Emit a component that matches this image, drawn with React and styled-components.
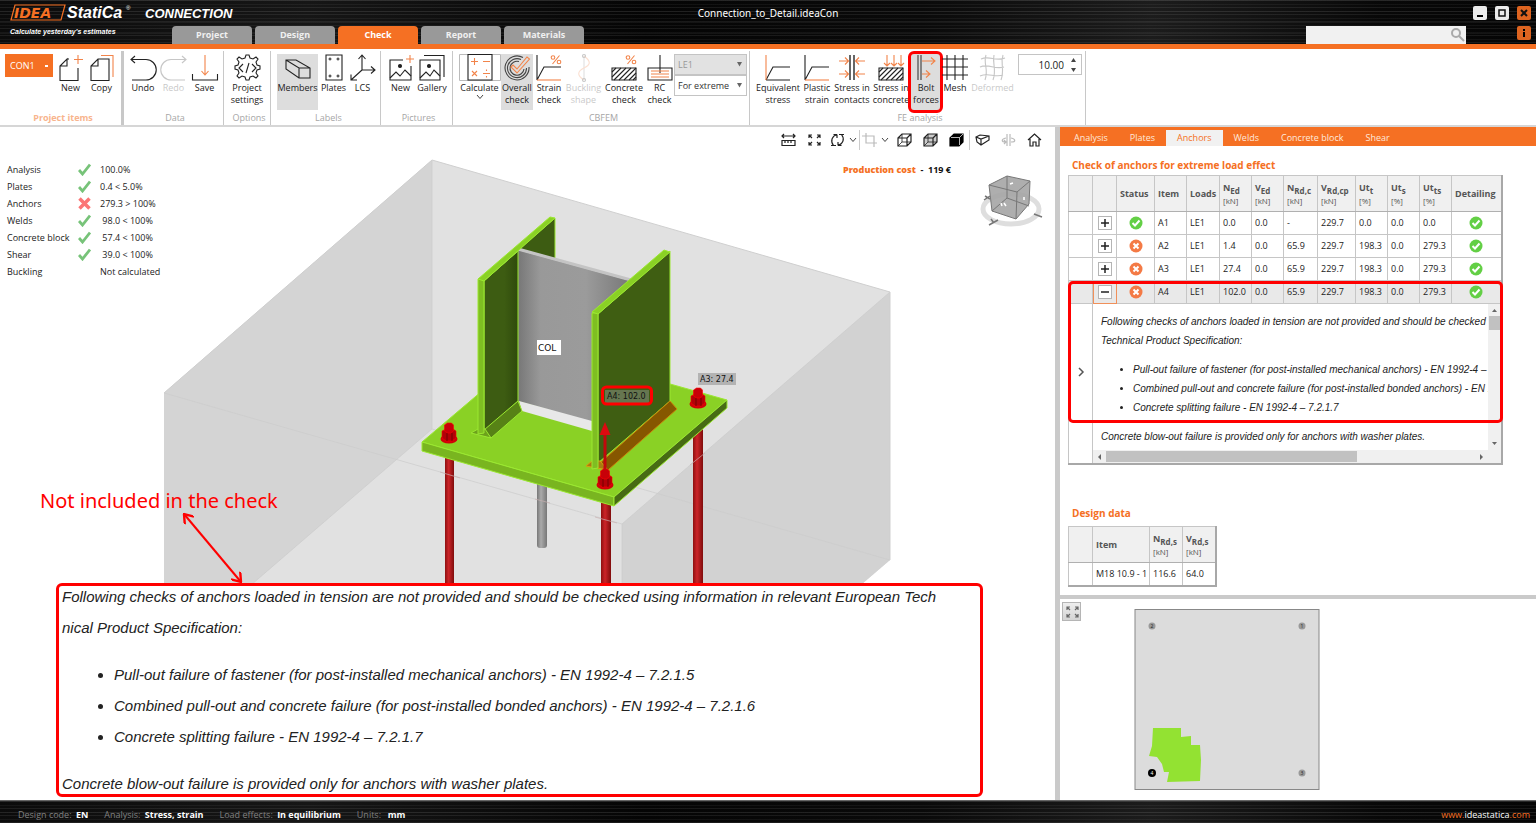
import React from 'react';
import styled, { createGlobalStyle, ThemeProvider } from 'styled-components';

const theme = {
  colors: {
    primary: '#f57023',
    txt: '#222222',
    muted: '#a6a6a6',
    line: '#c8c8c8',
    mark: '#ff0000',
  },
};

const GlobalStyle = createGlobalStyle`
  * { box-sizing: border-box; }

  body {
    margin: 0;
    background: white;
    color: #222222;
    font: 9px/12px "Open Sans", "Noto Sans", sans-serif;
  }

  button, input, select {
    font: inherit;
    color: inherit;
  }

  button {
    padding: 0;
    border: none;
    background: none;
    cursor: pointer;
  }

  h2, p, ul, dl, dd { margin: 0; padding: 0; }
`;

const Page = styled.div`
  display: grid;
  grid-template-rows: auto auto 1fr auto;
  min-height: 100vh;
`;

/* ---------- title bar ---------- */

const brushed = `
  background:
    repeating-linear-gradient(180deg, rgba(255,255,255,.08) 0 1px, transparent 1px 4px, rgba(255,255,255,.05) 4px 5px, transparent 5px 7px),
    repeating-linear-gradient(180deg, rgba(255,255,255,.06) 0 1px, transparent 1px 11px),
    linear-gradient(90deg, #0b0b0b 0%, #161616 20%, #050505 42%, #0a0a0a 60%, #1c1c1c 75%, #080808 90%, #050505 100%);
`;

const Header = styled.header`
  display: grid;
  grid-template-columns: 1fr auto 1fr;
  height: 49px;
  border-bottom: 5px solid ${({ theme }) => theme.colors.primary};
  ${brushed}
`;

const HeaderLeft = styled.div`
  display: flex;
  min-width: 0;
`;

const Brand = styled.div`
  width: 172px;
  padding: 4px 0 0 9px;

  svg { display: block; overflow: visible; }
`;

const Tabs = styled.nav`
  display: flex;
  align-items: flex-end;
  gap: 3px;
`;

const Tab = styled.button`
  width: 80px;
  height: 18px;
  border-radius: 4px 4px 0 0;
  background: ${({ theme, $on }) => ($on ? theme.colors.primary : '#999999')};
  color: ${({ $on }) => ($on ? 'white' : '#f0f0f0')};
  font-weight: bold;
`;

const FileName = styled.div`
  padding-top: 7px;
  color: white;
  font: 10px/12px "Noto Sans", sans-serif;
  white-space: nowrap;
`;

const HeaderRight = styled.div`
  display: grid;
  grid-template-columns: 160px 70px;
  grid-template-rows: 26px 18px;
  justify-content: end;
`;

const WindowBtns = styled.div`
  grid-column: 1 / 3;
  display: flex;
  justify-content: flex-end;
  gap: 8px;
  padding: 6px 5px 0 0;
`;

const WinBtn = styled.button`
  width: 14px;
  height: 14px;
  border-radius: 2px;
  background: ${({ $hot }) => ($hot ? '#de6420' : '#ececec')};
  color: #111111;
  svg { display: block; }
`;

const InfoBtn = styled(WinBtn)`
  justify-self: end;
  margin-right: 5px;
`;

const Search = styled.label`
  display: flex;
  align-items: center;
  height: 18px;
  background: #f1f1f1;

  input {
    flex: 1;
    min-width: 0;
    border: none;
    outline: none;
    background: transparent;
  }
`;

/* ---------- ribbon ---------- */

const Ribbon = styled.div`
  display: flex;
  height: 78px;
  padding-top: 2px;
  border-bottom: 2px solid #d6d6d6;
`;

const Group = styled.section`
  display: flex;
  flex-direction: column;
  justify-content: space-between;
  padding: 3px 0 1px ${({ $pad }) => $pad || 4}px;
  width: ${({ $w }) => $w}px;
  border-right: ${({ $thick }) => ($thick ? '3px' : '1px')} solid ${({ theme }) => theme.colors.line};
`;

const Tools = styled.div`
  display: flex;
  align-items: flex-start;
`;

const GroupName = styled.div`
  text-align: center;
  color: ${({ theme, $hot }) => ($hot ? '#f8b48d' : theme.colors.muted)};
  font-weight: ${({ $hot }) => ($hot ? 'bold' : 'normal')};
`;

const ToolBtn = styled.button`
  position: relative;
  display: flex;
  flex-direction: column;
  align-items: center;
  width: ${({ $w }) => $w}px;
  height: 56px;
  background: ${({ $on }) => ($on ? '#dddddd' : 'transparent')};
  opacity: ${({ disabled }) => (disabled ? 0.25 : 1)};
  color: #222222;
  line-height: 12px;
  text-align: center;
  white-space: pre;

  svg { flex: none; overflow: visible; }
`;

const Marked = styled.span`
  position: absolute;
  inset: -3px -2px -3px -3px;
  border: 3px solid ${({ theme }) => theme.colors.mark};
  border-radius: 6px;
`;

const ItemSelect = styled.select`
  appearance: none;
  width: 48px;
  height: 23px;
  margin-right: 2px;
  padding: 0 5px;
  border: none;
  color: white;
  background: ${({ theme }) => theme.colors.primary}
    linear-gradient(white, white) no-repeat 40px 11px / 3px 2px;
`;

const Picks = styled.div`
  display: flex;
  flex-direction: column;
  margin-left: 1px;
`;

const Pick = styled.select`
  appearance: none;
  width: 73px;
  height: 21px;
  padding: 0 3px;
  border: 1px solid #c4c4c4;
  border-radius: 0;
  background: ${({ disabled }) => (disabled ? '#e2e2e2' : 'white')};
  color: ${({ disabled }) => (disabled ? '#999999' : '#333333')};
  opacity: 1;
`;

const PickWrap = styled.label`
  position: relative;
  display: block;

  svg {
    position: absolute;
    right: 4px;
    top: 7px;
  }
`;

const Spin = styled.label`
  display: flex;
  align-items: center;
  width: 64px;
  height: 21px;
  margin-left: 2px;
  border: 1px solid #c4c4c4;

  input {
    width: 47px;
    border: none;
    outline: none;
    text-align: right;
    font-size: 10px;
  }

  svg { margin-left: 4px; }
`;

/* ---------- work area ---------- */

const Work = styled.main`
  display: grid;
  grid-template-columns: minmax(0, 1fr) 476px;
`;

const Viewport = styled.section`
  position: relative;
  display: flex;
  flex-direction: column;
  min-height: 670px;
  border-right: 5px solid #cacaca;
`;

const Scene = styled.svg`
  position: absolute;
  inset: 0;
  width: 100%;
  height: 100%;
`;

const ViewTools = styled.div`
  position: relative;
  display: flex;
  justify-content: flex-end;
  align-items: center;
  gap: 11px;
  height: 26px;
  padding-right: 13px;

  svg { display: block; }
`;

const Pair = styled.div`
  display: flex;
  align-items: center;
  gap: 4px;
  margin: 0 -3px;
`;

const Bar = styled.i`
  width: 1px;
  height: 20px;
  margin: 0 -6px;
  background: #cccccc;
`;

const Cost = styled.div`
  position: relative;
  padding: 11px 104px 0 0;
  text-align: right;
  font-weight: bold;
  color: #111111;

  b { color: ${({ theme }) => theme.colors.primary}; }
`;

const Stats = styled.dl`
  position: relative;
  display: grid;
  grid-template-columns: 71px 22px auto;
  align-content: start;
  justify-content: start;
  grid-auto-rows: 17px;
  margin-top: -15px;
  padding-left: 7px;
  line-height: 17px;
  white-space: pre;

  svg { display: block; margin-top: 2px; }
`;

const Note = styled.div`
  position: absolute;
  left: 40px;
  bottom: 286px;
  color: ${({ theme }) => theme.colors.mark};
  font: 20px/26px "Noto Sans", sans-serif;
`;

const Callout = styled.div`
  position: absolute;
  left: 56px;
  right: 72px;
  bottom: 3px;
  height: 214px;
  display: flex;
  align-items: center;
  padding: 0 3px;
  border: 3px solid ${({ theme }) => theme.colors.mark};
  border-radius: 6px;
  background: white;
`;

const Remarks = styled.div`
  font: italic ${({ $big }) => ($big ? '15px/31px' : '10px/19px')} "Liberation Sans", Arial, sans-serif;
  color: #222222;
  white-space: nowrap;

  ul {
    margin: ${({ $big }) => ($big ? '16px 0' : '10px 0')};
    padding-left: ${({ $big }) => ($big ? '52px' : '32px')};
  }
`;

/* ---------- side panel ---------- */

const Side = styled.aside`
  display: flex;
  flex-direction: column;
`;

const SideTabs = styled.nav`
  display: flex;
  align-items: flex-end;
  height: 19px;
  padding-left: 3px;
  background: ${({ theme }) => theme.colors.primary};
`;

const SideTab = styled.button`
  height: 16px;
  padding: 0 11px;
  color: ${({ theme, $on }) => ($on ? theme.colors.primary : '#ffe9dc')};
  background: ${({ $on }) => ($on ? '#f1f1f1' : 'transparent')};
`;

const Results = styled.div`
  flex: 1;
  padding: 12px 8px 0;

  h2 {
    padding-left: 4px;
    font-size: 10px;
    line-height: 14px;
    color: ${({ theme }) => theme.colors.primary};
  }
`;

const TableBox = styled.div`
  position: relative;
  width: ${({ $w }) => $w}px;
  margin: ${({ $top }) => $top}px 0 ${({ $after }) => $after}px;
`;

const Table = styled.table`
  width: 100%;
  table-layout: fixed;
  border-collapse: collapse;
  border: 1px solid #a8a8a8;
  border-right-width: 2px;
  border-bottom-width: 2px;

  th, td {
    height: 23px;
    padding: 0 0 0 3px;
    border: 1px solid #c6c6c6;
    text-align: left;
    white-space: nowrap;
  }

  th {
    height: 36px;
    background: #f0f0f0;
    color: #555555;
    border-bottom-color: #b0b0b0;
  }

  sub { font-size: 8px; line-height: 0; }
  small { display: block; margin-top: 2px; font-size: 8px; line-height: 10px; font-weight: normal; }
`;

const Row = styled.tr`
  background: ${({ $on }) => ($on ? '#e9e9e9' : 'white')};
`;

const MidCell = styled.td`
  && { padding: 0; text-align: center; }
  svg { display: block; margin: 0 auto; }
  outline: ${({ $focus }) => ($focus ? '1px solid #f0905a' : 'none')};
  outline-offset: -1px;
`;

const MarkerCell = styled(MidCell)`
  && { padding-bottom: 24px; }
`;

const Expander = styled.button`
  display: block;
  width: 14px;
  height: 14px;
  margin: 0 auto;
  border: 1px solid #b5b5b5;
  background: white;
  svg { display: block; }
`;

const DetailCell = styled.td`
  && { padding: 0; vertical-align: top; }
`;

const Scroller = styled.div`
  display: grid;
  grid-template-columns: minmax(0, 1fr) 13px;
  grid-template-rows: 146px 13px;
`;

const ScrollBody = styled.div`
  overflow: hidden;
  padding: 8px 0 0 8px;
`;

const Track = styled.div`
  display: flex;
  flex-direction: ${({ $down }) => ($down ? 'column' : 'row')};
  align-items: center;
  background: #f0f0f0;

  i {
    width: ${({ $down }) => ($down ? '11px' : '251px')};
    height: ${({ $down }) => ($down ? '14px' : '11px')};
    background: #c1c1c1;
  }

  svg { flex: none; }
  svg:last-child { margin: ${({ $down }) => ($down ? 'auto 0 0' : '0 0 0 auto')}; }
`;

const RowMark = styled.div`
  position: absolute;
  inset: 106px -1px auto 0;
  height: 142px;
  border: 3px solid ${({ theme }) => theme.colors.mark};
  border-radius: 5px;
`;

const Preview = styled.div`
  display: flex;
  align-items: flex-start;
  gap: 53px;
  height: 205px;
  padding: 3px 2px 0;
  border-top: 4px solid #cacaca;

  > svg { margin-top: 7px; }
`;

const FitBtn = styled.button`
  width: 19px;
  height: 19px;
  border: 1px solid #b5b5b5;
  background: linear-gradient(#eeeeee, #d4d4d4);
  svg { display: block; margin: 2px; }
`;

const Footer = styled.footer`
  display: flex;
  gap: 16px;
  align-items: center;
  height: 23px;
  padding: 6px 6px 0 18px;
  ${brushed}
  border-top: 1px solid #666666;
  color: #808080;

  b { margin-left: 2px; color: white; }

  a {
    margin-left: auto;
    color: ${({ theme }) => theme.colors.primary};
    text-decoration: none;
  }
  a span { color: white; }
`;

/* ---------- icons ---------- */

const O = '#f2844a';

const Ico = ({ w = 26, children }) => (
  <svg width={w} height="28" viewBox={`0 0 ${w} 28`} fill="none" stroke="#222" strokeWidth="1.1" aria-hidden="true">
    {children}
  </svg>
);

const Small = ({ children, ...rest }) => (
  <svg width="15" height="14" viewBox="0 0 15 14" fill="none" stroke="#222" strokeWidth="1.2" aria-hidden="true" {...rest}>
    {children}
  </svg>
);

const Hatch = () => (
  <>
    <path d="M1 14h24v12H1z" />
    <path d="M1 18l4-4M1 23l9-9M3 26l12-12M8 26l12-12M13 26l12-12M18 26l7-7M22 26l3-3" />
  </>
);

const Percent = () => (
  <g stroke={O}>
    <circle cx="17" cy="3.5" r="1.8" />
    <circle cx="23" cy="8" r="1.8" />
    <path d="M23.500 1.500l-7 8.500" />
  </g>
);

const icons = {
  newItem: (
    <Ico>
      <path d="M20 14v12.5H2V12l7-7v7H2M9 5h2" />
      <path d="M20 1v9M16 5.5h9" stroke={O} />
    </Ico>
  ),
  copy: (
    <Ico>
      <path d="M20 5v21.5H2V12l7-7zM9 5v7H2M9 5h11" />
      <path d="M12 1.5h12V23" stroke={O} />
    </Ico>
  ),
  undo: <Ico><path d="M5 2L1 5.5 5 9M1 5.5h15a10 10 0 0 1 0 20.500H2" /></Ico>,
  redo: <Ico><path d="M21 2l4 3.500L21 9M25 5.500H10a10 10 0 0 0 0 20.500h14" /></Ico>,
  save: (
    <Ico>
      <path d="M.5 20v6h25v-6" />
      <path d="M13 1v19M9.500 17l3.500 4 3.500-4" stroke={O} />
    </Ico>
  ),
  settings: (
    <Ico>
      <path d="M11 4l1-3h3l1 3 3 1 3-2 2 2-2 3 1 3 3 1v3l-3 1-1 3 2 3-2 2-3-2-3 1-1 3h-3l-1-3-3-1-3 2-2-2 2-3-1-3-3-1v-3l3-1 1-3-2-3 2-2 3 2z" />
      <path d="M9 10l-4 4 4 4M18 10l4 4-4 4M15 9l-3 10" />
    </Ico>
  ),
  members: <Ico><path d="M1 6h10l14 8v10H14L1 15zM1 6l13 8h11M14 14v10" /></Ico>,
  plates: (
    <Ico>
      <path d="M5 1h16v25H5z" />
      <g strokeWidth="1"><circle cx="9" cy="5" r="1" /><circle cx="17" cy="5" r="1" /><circle cx="9" cy="22" r="1" /><circle cx="17" cy="22" r="1" /></g>
    </Ico>
  ),
  lcs: <Ico><path d="M12 1v15h13M12 16L1 26M8.500 5L12 1l3.500 4M21 12.500l4 3.500-4 3.500M1 20.500V26h6" /></Ico>,
  picture: (
    <Ico>
      <path d="M15 6H2v20h21V12" />
      <path d="M2 24l6-6 4 4 5-6 6 6" />
      <circle cx="12" cy="12" r="1.5" fill="#222" />
      <path d="M22 1v8M18 5h8" stroke={O} />
    </Ico>
  ),
  gallery: (
    <Ico>
      <path d="M1 6h20v20H1zM5 1.500h20V23" />
      <path d="M1 24l6-6 4 4 4-6 6 6" />
      <circle cx="10" cy="12" r="1.5" fill="#222" />
    </Ico>
  ),
  calculate: (
    <Ico w={42}>
      <path d="M.5.500h41v26H.5z" stroke="#bbb" strokeWidth="1" />
      <path d="M9 .5h24v25.500H9z" />
      <path d="M12 7.500h7M15.500 4v7M24 7.500h7M13 17l5 5M18 17l-5 5M24 19.500h7M27.500 15.500v1.500M27.500 22v1.500" stroke={O} />
    </Ico>
  ),
  overall: (
    <Ico>
      <g stroke="#444">
        <path d="M19 3.500A12 12 0 1 0 25 13" />
        <path d="M17 5.500A9.500 9.500 0 1 0 22.500 14" />
        <path d="M15 7.500A7 7 0 1 0 20 15" />
      </g>
      <path d="M7 13l2-2 4 4 10-12 2.500 2L13 19z" stroke={O} fill="#ddd" />
    </Ico>
  ),
  strain: (
    <Ico>
      <path d="M1 1v25l7-13h17" />
      <path d="M1 26h24" stroke={O} />
      <Percent />
    </Ico>
  ),
  buckling: (
    <Ico>
      <path d="M13 2v24" stroke="#888" />
      <path d="M13 2c8 6 6 9 0 12s-8 7 0 12" stroke={O} />
      <circle cx="13" cy="2" r="1.5" /><circle cx="13" cy="26" r="1.5" />
    </Ico>
  ),
  concrete: <Ico><Hatch /><Percent /></Ico>,
  rc: (
    <Ico>
      <path d="M1 14h24v12H1zM13 1v18" />
      <path d="M4 17h18M4 20h18M4 23h18" stroke={O} />
    </Ico>
  ),
  equivalent: (
    <Ico>
      <path d="M1 26l7-13h17M1 26h24" />
      <path d="M1 1v25" stroke={O} />
    </Ico>
  ),
  plastic: (
    <Ico>
      <path d="M1 1v25l7-13h17" />
      <path d="M1 26h24" stroke={O} />
    </Ico>
  ),
  contacts: (
    <Ico>
      <path d="M11 1v25M15 1v25" stroke="#666" strokeWidth="2" />
      <path d="M0 7h9M6 3.500L9.500 7 6 10.500M26 7h-9M20 3.500L16.500 7l3.500 3.500M0 20h9M6 16.500L9.500 20 6 23.500M26 20h-9M20 16.500L16.500 20l3.500 3.500" stroke={O} />
    </Ico>
  ),
  inConcrete: (
    <Ico>
      <Hatch />
      <path d="M9 1v11M6 9l3 3 3-3M16 1v11M13 9l3 3 3-3M23 1v11M20 9l3 3 3-3" stroke={O} />
    </Ico>
  ),
  bolt: (
    <Ico>
      <path d="M5 1v25M8 1v25" stroke="#666" strokeWidth="1.5" />
      <path d="M9 7h13M18 3.500L22 7l-4 3.500M9 20h8M13 16.500l4 3.500-4 3.500" stroke={O} />
    </Ico>
  ),
  mesh: <Ico><path d="M5 1v25M13 1v25M21 1v25M0 5h26M0 13h26M0 21h26" /></Ico>,
  deformed: (
    <Ico>
      <path d="M6 1c-3 9 3 14-1 25M14 1c-2 9 3 14-1 25M23 1c-3 9 2 14-2 25M1 5c9-4 14 3 24-1M0 13c9-4 14 3 24 0M0 22c9-4 14 2 23-1" />
    </Ico>
  ),
};

const Chevron = () => (
  <svg width="8" height="6" viewBox="0 0 8 6" fill="none" stroke="#444" aria-hidden="true"><path d="M1 1l3 3.500L7 1" /></svg>
);

const Caret = () => (
  <svg width="7" height="6" viewBox="0 0 7 6" fill="#666" aria-hidden="true"><path d="M1 1h5L3.500 5.500z" /></svg>
);

const Corners = ({ color = '#222' }) => (
  <Small stroke={color}>
    <path d="M2 5V2h3M2 2l3 3M10 2h3v3M13 2l-3 3M2 9v3h3M2 12l3-3M13 9v3h-3M13 12l-3-3" />
  </Small>
);

const Arrow = ({ d }) => (
  <svg width="13" height="12" viewBox="0 0 13 12" aria-hidden="true"><path d={d} fill="#666" /></svg>
);

const Passed = () => (
  <svg width="14" height="14" viewBox="0 0 14 14" aria-label="passed">
    <circle cx="7" cy="7" r="6.5" fill="#63cf45" />
    <path d="M3.500 7l2.500 2.500 4.500-5" fill="none" stroke="white" strokeWidth="2" />
  </svg>
);

const Failed = () => (
  <svg width="14" height="14" viewBox="0 0 14 14" aria-label="failed">
    <circle cx="7" cy="7" r="6.5" fill="#f47a45" />
    <path d="M4.500 4.500l5 5M9.500 4.500l-5 5" fill="none" stroke="white" strokeWidth="2" />
  </svg>
);

const Tick = () => (
  <svg width="13" height="13" viewBox="0 0 13 13" aria-hidden="true"><path d="M1 7l3.500 4L12 1.500" fill="none" stroke="#77c379" strokeWidth="2.8" /></svg>
);

const Cross = () => (
  <svg width="13" height="13" viewBox="0 0 13 13" aria-hidden="true"><path d="M1.500 1.500l10 10M11.500 1.500l-10 10" fill="none" stroke="#fb7676" strokeWidth="3.5" /></svg>
);

/* ---------- data ---------- */

const groups = [
  { name: 'Data', w: 100, pad: 3, tools: [['undo', 'Undo', 32], ['redo', 'Redo', 29, { disabled: true }], ['save', 'Save', 33]] },
  { name: 'Options', w: 47, tools: [['settings', 'Project\nsettings', 38]] },
  { name: 'Labels', w: 110, pad: 6, tools: [['members', 'Members', 41, { on: true }], ['plates', 'Plates', 31], ['lcs', 'LCS', 27]] },
  { name: 'Pictures', w: 72, pad: 4, tools: [['picture', 'New', 31], ['gallery', 'Gallery', 32]] },
  {
    name: 'CBFEM', w: 297, pad: 5,
    tools: [
      ['calculate', 'Calculate', 43], ['overall', 'Overall\ncheck', 32, { on: true }], ['strain', 'Strain\ncheck', 32],
      ['buckling', 'Buckling\nshape', 37, { disabled: true }], ['concrete', 'Concrete\ncheck', 44], ['rc', 'RC\ncheck', 27],
    ],
  },
  {
    name: 'FE analysis', w: 336, pad: 5,
    tools: [
      ['equivalent', 'Equivalent\nstress', 46], ['plastic', 'Plastic\nstrain', 32], ['contacts', 'Stress in\ncontacts', 38],
      ['inConcrete', 'Stress in\nconcrete', 40], ['bolt', 'Bolt\nforces', 30, { on: true, mark: true }], ['mesh', 'Mesh', 28],
      ['deformed', 'Deformed', 47, { disabled: true }],
    ],
  },
];

const summary = [
  ['Analysis', true, '100.0%'],
  ['Plates', true, '0.4 < 5.0%'],
  ['Anchors', false, '279.3 > 100%'],
  ['Welds', true, ' 98.0 < 100%'],
  ['Concrete block', true, ' 57.4 < 100%'],
  ['Shear', true, ' 39.0 < 100%'],
  ['Buckling', null, 'Not calculated'],
];

const anchors = [
  ['A1', true, '0.0', '0.0', '-', '229.7', '0.0', '0.0', '0.0'],
  ['A2', false, '1.4', '0.0', '65.9', '229.7', '198.3', '0.0', '279.3'],
  ['A3', false, '27.4', '0.0', '65.9', '229.7', '198.3', '0.0', '279.3'],
  ['A4', false, '102.0', '0.0', '65.9', '229.7', '198.3', '0.0', '279.3'],
];

const heads = [
  ['N', 'Ed', 'kN'], ['V', 'Ed', 'kN'], ['N', 'Rd,c', 'kN'], ['V', 'Rd,cp', 'kN'],
  ['Ut', 't', '%'], ['Ut', 's', '%'], ['Ut', 'ts', '%'],
];

const colWidths = [24, 24, 38, 32, 33, 32, 32, 34, 38, 32, 32, 32, 50];

/* ---------- parts ---------- */

const Logo = () => (
  <Brand>
    <svg width="160" height="32" viewBox="0 0 160 32" role="img" aria-label="IDEA StatiCa">
      <path d="M6 1h50l-4 15H2z" fill="none" stroke="#f57023" strokeWidth="1.2" />
      <text x="5" y="14" fontFamily="DejaVu Sans" fontWeight="bold" fontStyle="italic" fontSize="14" fill="#f57023">IDEA</text>
      <text x="58" y="14" fontFamily="Liberation Sans" fontWeight="bold" fontStyle="italic" fontSize="16" fill="white">StatiCa</text>
      <text x="117" y="6" fontFamily="Liberation Sans" fontSize="6" fill="white">®</text>
      <text x="136" y="14" fontFamily="Liberation Sans" fontWeight="bold" fontStyle="italic" fontSize="13" fill="white">CONNECTION</text>
      <text x="1" y="30" fontFamily="Liberation Sans" fontStyle="italic" fontWeight="bold" fontSize="7" fill="white">Calculate yesterday's estimates</text>
    </svg>
  </Brand>
);

const Tool = ({ icon, label, w, on, mark, disabled }) => (
  <ToolBtn $w={w} $on={on} disabled={disabled}>
    {icons[icon]}
    {label}
    {icon === 'calculate' && <Chevron />}
    {mark && <Marked />}
  </ToolBtn>
);

const RemarkText = ({ big }) => (
  <Remarks $big={big}>
    <p>
      {big ? (
        <>Following checks of anchors loaded in tension are not provided and should be checked using information in relevant European Tech<br />nical Product Specification:</>
      ) : (
        <>Following checks of anchors loaded in tension are not provided and should be checked using information in relevant European<br />Technical Product Specification:</>
      )}
    </p>
    <ul>
      <li>Pull-out failure of fastener (for post-installed mechanical anchors) - EN 1992-4 – 7.2.1.5</li>
      <li>Combined pull-out and concrete failure (for post-installed bonded anchors) - EN 1992-4 – 7.2.1.6</li>
      <li>Concrete splitting failure - EN 1992-4 – 7.2.1.7</li>
    </ul>
    <p>Concrete blow-out failure is provided only for anchors with washer plates.</p>
  </Remarks>
);

const Nut = ({ x, y }) => (
  <g transform={`translate(${x} ${y})`}>
    <ellipse cx="0" cy="6" rx="8.5" ry="4.5" fill="#d00008" />
    <path d="M-7-2l4-2h7l3 2v7l-4 3h-6l-4-3z" fill="#b40008" stroke="#f00" strokeWidth=".6" />
    <path d="M-4.500-8l3-2h4l2 2v6l-3 2h-3l-3-2z" fill="#c80008" stroke="#f00" strokeWidth=".6" />
    <path d="M-2 0v8M3 0v8" stroke="#600" strokeWidth=".8" />
  </g>
);

const Model = () => (
  <Scene viewBox="0 127 1055 673" aria-label="3D model">
    <defs>
      <linearGradient id="rod">
        <stop offset="0" stopColor="#8d1010" /><stop offset=".4" stopColor="#cc2428" /><stop offset="1" stopColor="#800c0c" />
      </linearGradient>
      <linearGradient id="steel">
        <stop offset="0" stopColor="#777" /><stop offset=".4" stopColor="#aaa" /><stop offset="1" stopColor="#777" />
      </linearGradient>
      <linearGradient id="web">
        <stop offset="0" stopColor="#777" /><stop offset=".2" stopColor="#999" /><stop offset=".6" stopColor="#9b9b9b" /><stop offset="1" stopColor="#777" />
      </linearGradient>
      <linearGradient id="inner">
        <stop offset="0" stopColor="#3d5c12" /><stop offset=".6" stopColor="#3d5c12" /><stop offset="1" stopColor="#2f4a0c" />
      </linearGradient>
      <marker id="tip" viewBox="0 0 10 10" refX="9" refY="5" markerWidth="6" markerHeight="6" orient="auto-start-reverse">
        <path d="M2 0l7 5-7 5" fill="none" stroke="red" strokeWidth="2" />
      </marker>
    </defs>

    <path d="M164 393L432 160l458 132v268L622 790 164 660z" fill="#e1e1e1" />
    <path d="M164 393L432 160v269L164 660z" fill="#d4d4d4" />
    <path d="M622 524l268-232v268L622 790z" fill="#d2d2d2" />
    <path d="M164 393l458 131L890 292M622 524v266M432 160v269M432 429l458 131M432 429L164 660" fill="none" stroke="#cccccc" strokeWidth=".7" />
    <path d="M164 393L432 160l458 132v268" fill="none" stroke="#cfcfcf" />

    <rect x="445" y="455" width="9" height="135" fill="url(#rod)" />
    <rect x="601" y="500" width="10" height="90" fill="url(#rod)" />
    <rect x="693" y="428" width="10" height="160" fill="url(#rod)" />
    <rect x="537" y="480" width="10" height="68" rx="3" fill="url(#steel)" />
    <path d="M440 472l20 6M535 499l15 4M595 517l22 6M690 465l15-12" stroke="#c8b0b0" strokeWidth=".7" />

    <g stroke="#9be831" strokeWidth="1" strokeLinejoin="round">
      <path d="M422 442L535 346l192 54-113 97z" fill="#8ad125" />
      <path d="M422 442l192 55v9l-192-55z" fill="#79b520" />
      <path d="M614 497l113-97v8l-113 98z" fill="#476b14" />
      <path d="M519 249l36-31v41l-36-10z" fill="#3d5c12" />
    </g>
    <path d="M518 250l113 31-39 32v109l-74-21z" fill="url(#web)" />
    <path d="M631 281l-39 32v12z" fill="#6d6d6d" opacity=".5" />
    <path d="M518 249l113 31" stroke="#c4c4c4" strokeWidth="3" />
    <path d="M519 401l73 20v10l-70-20z" fill="#e8e8e8" />
    <g stroke="#9be831" strokeWidth="1" strokeLinejoin="round">
      <path d="M484 281l34-30v150l-34 32z" fill="url(#inner)" />
      <path d="M484 430l34-29 4 10-31 27z" fill="#578216" />
      <path d="M471 433l7-4 7 0 6 9z" fill="#6da11c" />
      <path d="M478 279h6v154l-6 1z" fill="#7fbe22" />
      <path d="M478 279l72-62 5 1-71 63z" fill="#8ad125" />
      <path d="M598 314l72-63v150l-72 62z" fill="#3f5e12" />
      <path d="M600 463l70-62 7 8-69 61z" fill="#865700" stroke="#c98408" />
      <path d="M586 466l6-5h8l8 9z" fill="#a87a10" stroke="#d8a010" />
      <path d="M592 313h6v155l-6 1z" fill="#7fbe22" />
      <path d="M592 312l72-62 6 2-72 62z" fill="#8ad125" />
    </g>

    <Nut x={449} y={433} />
    <Nut x={605} y={479} />
    <Nut x={698} y={398} />
    <path d="M605 470v-36" stroke="#c0080c" strokeWidth="3" />
    <path d="M605 422l5.500 13h-11z" fill="#dd0a10" />

    <rect x="537" y="340" width="24" height="15" fill="white" />
    <rect x="698" y="373" width="38" height="12" fill="#b3b3b3" />
    <rect x="605" y="390" width="44" height="13" fill="#667650" />
    <g fontFamily="DejaVu Sans" fill="#111">
      <text x="538" y="351" fontSize="9">COL</text>
      <text x="700" y="382" fontSize="8">A3: 27.4</text>
      <text x="607" y="399" fontSize="8">A4: 102.0</text>
    </g>
    <rect x="602.5" y="387" width="49" height="17" rx="4" fill="none" stroke="red" strokeWidth="3" />
    <path d="M184 514l57 68" stroke="red" strokeWidth="2" markerStart="url(#tip)" markerEnd="url(#tip)" />

    <ellipse cx="1011" cy="209" rx="28" ry="15" fill="none" stroke="#dedede" strokeWidth="5" />
    <path d="M989 185l18-9 23 5-1 23-13 15-24-8z" fill="#a5a5a5" opacity=".9" />
    <path d="M989 185l18-9 23 5-13 11zM1017 192l-1 27M1007 176v22l22 8M1007 198l-15 13M989 185l3 26 24 8 13-15 1-23" fill="none" stroke="#777" />
    <path d="M989 225l9-5M991 219l3 4M984 200l6-4M985 196l5 3M1034 214l8 3" stroke="#777" strokeWidth="1.5" />
    <path d="M1010 184l3-1M1001 203l1 3M1004 203l2 3M1024 200v-3" stroke="white" strokeWidth="1.5" />
  </Scene>
);

const CubeIcon = ({ fill = 'none' }) => (
  <Small fill={fill}>
    <path d="M1 5l4-4h9v8l-4 4H1zM1 5h9v8M10 5l4-4" stroke={fill === '#000' ? '#000' : '#222'} />
    {fill === '#000' ? <path d="M2 4.500h8.500V12M10.500 4.500L14 1" stroke="#fff" strokeWidth=".7" fill="none" /> : <path d="M5 1v8h9M5 9l-4 4" strokeWidth=".8" fill="none" />}
  </Small>
);

const ViewBar = () => (
  <ViewTools>
    <button aria-label="Dimensions"><Small><path d="M1 3h13M3 1L1 3l2 2M12 1l2 2-2 2M1 7.500h13v5H1zM4 8v2M7 8v2M10 8v2" /></Small></button>
    <button aria-label="Fit view"><Corners /></button>
    <Pair>
      <button aria-label="Rotate"><Small><path d="M7 5V1.500M7 1.500H3.500M7 1.500C2 3 0 8 3.500 12.500M1 12.500h5M8 12.500V9M8 12.500h3.500M8 12.500C13 11 15 6 11.500 1.500M9 1.500h5" /></Small></button>
      <Chevron />
    </Pair>
    <Bar />
    <Pair>
      <button aria-label="Crop"><Small stroke="#bbb"><path d="M4 0v10h11M0 3h12v11" /></Small></button>
      <Chevron />
    </Pair>
    <button aria-label="Wireframe"><CubeIcon /></button>
    <button aria-label="Transparent"><CubeIcon fill="#ccc" /></button>
    <button aria-label="Solid"><CubeIcon fill="#000" /></button>
    <Bar />
    <button aria-label="Member view"><Small><path d="M1 4l4-2 9 1v4l-8 5-4-3zM1 4l5 2 8-3M6 6v6" /></Small></button>
    <button aria-label="Mirror"><Small stroke="#bbb"><path d="M6 1v12M9 1v12M5 5C0 6 0 9 5 9M3 7l2 2-2 2M10 5c5 1 5 4 0 4" /></Small></button>
    <button aria-label="Home"><Small><path d="M1 7l6.500-6L14 7M3 6v7h3V9h3v4h3V6" /></Small></button>
  </ViewTools>
);

const Head = ({ sym, sub, unit }) => (
  <th>{sym}<sub>{sub}</sub><small>[{unit}]</small></th>
);

const AnchorTable = () => (
  <TableBox $w={434} $top={3} $after={41}>
    <Table>
      <colgroup>{colWidths.map((w, i) => <col key={i} width={w} />)}</colgroup>
      <thead>
        <tr>
          <th /><th /><th>Status</th><th>Item</th><th>Loads</th>
          {heads.map(([sym, sub, unit]) => <Head key={sym + sub} sym={sym} sub={sub} unit={unit} />)}
          <th>Detailing</th>
        </tr>
      </thead>
      <tbody>
        {anchors.map(([item, ok, ...vals]) => {
          const open = item === 'A4';
          return (
            <Row key={item} $on={open}>
              <td />
              <MidCell $focus={open}>
                <Expander aria-label={`Toggle ${item}`}>
                  <svg width="12" height="12" viewBox="0 0 12 12" stroke="#222" strokeWidth="1.5"><path d={open ? 'M2 6h8' : 'M2 6h8M6 2v8'} /></svg>
                </Expander>
              </MidCell>
              <MidCell>{ok ? <Passed /> : <Failed />}</MidCell>
              <td>{item}</td>
              <td>LE1</td>
              {vals.map((v, i) => <td key={i}>{v}</td>)}
              <MidCell><Passed /></MidCell>
            </Row>
          );
        })}
        <tr>
          <MarkerCell>
            <svg width="8" height="10" viewBox="0 0 8 10" fill="none" stroke="#555" strokeWidth="1.5"><path d="M2 1l4 4-4 4" /></svg>
          </MarkerCell>
          <DetailCell colSpan="12">
            <Scroller>
              <ScrollBody><RemarkText /></ScrollBody>
              <Track $down><Arrow d="M4 8l2.500-3L9 8z" /><i /><Arrow d="M4 4l2.500 3L9 4z" /></Track>
              <Track><Arrow d="M8 3L5 6l3 3z" /><i /><Arrow d="M5 3l3 3-3 3z" /></Track>
              <Track />
            </Scroller>
          </DetailCell>
        </tr>
      </tbody>
    </Table>
    <RowMark />
  </TableBox>
);

const DesignTable = () => (
  <TableBox $w={148} $top={6} $after={8}>
    <Table>
      <colgroup>{[24, 57, 33, 33].map((w, i) => <col key={i} width={w} />)}</colgroup>
      <thead>
        <tr><th /><th>Item</th><Head sym="N" sub="Rd,s" unit="kN" /><Head sym="V" sub="Rd,s" unit="kN" /></tr>
      </thead>
      <tbody>
        <tr><td /><td>M18 10.9 - 1</td><td>116.6</td><td>64.0</td></tr>
      </tbody>
    </Table>
  </TableBox>
);

const PlatePlan = () => (
  <svg width="186" height="181" viewBox="1134 609 186 181" role="img" aria-label="Anchor plan">
    <rect x="1135" y="609.5" width="184" height="180" fill="#dcdcdc" stroke="#888" />
    <path d="M1153 728h28v9l10-1v9h9l1 15-1 21-33 1 2-10h-5l-2-8-5-7-8-1 3-10z" fill="#93e232" />
    {[[1152, 626, '2'], [1302, 626, '1'], [1302, 773, '3'], [1152, 773, '4']].map(([x, y, n]) => (
      <g key={n}>
        <circle cx={x} cy={y} r={n === '4' ? 4 : 3.5} fill={n === '4' ? '#000' : '#999'} />
        <text x={x} y={y + 2} fontSize="5" textAnchor="middle" fill={n === '4' ? '#fff' : '#222'}>{n}</text>
      </g>
    ))}
  </svg>
);

export default function App() {
  return (
    <ThemeProvider theme={theme}>
      <GlobalStyle />
      <Page>
        <Header>
          <HeaderLeft>
            <Logo />
            <Tabs>
              {['Project', 'Design', 'Check', 'Report', 'Materials'].map((t) => <Tab key={t} $on={t === 'Check'}>{t}</Tab>)}
            </Tabs>
          </HeaderLeft>
          <FileName>Connection_to_Detail.ideaCon</FileName>
          <HeaderRight>
            <WindowBtns>
              <WinBtn aria-label="Minimize"><svg width="14" height="14"><path d="M4 9h6v2H4z" /></svg></WinBtn>
              <WinBtn aria-label="Maximize"><svg width="14" height="14"><path d="M4 4h6v6H4z" fill="none" stroke="#111" strokeWidth="1.5" /></svg></WinBtn>
              <WinBtn $hot aria-label="Close"><svg width="14" height="14"><path d="M4 4l6 6M10 4l-6 6" stroke="#111" strokeWidth="2" /></svg></WinBtn>
            </WindowBtns>
            <Search>
              <input aria-label="Search" />
              <svg width="16" height="16" viewBox="0 0 16 16" fill="none" stroke="#aaa" strokeWidth="2"><circle cx="6" cy="6" r="4" /><path d="M9 9l5 5" /></svg>
            </Search>
            <InfoBtn $hot aria-label="Info"><svg width="14" height="14"><path d="M6 3h2v2H6zM6 6h2v5H6z" /></svg></InfoBtn>
          </HeaderRight>
        </Header>

        <Ribbon>
          <Group $w={124} $pad={5} $thick>
            <Tools>
              <ItemSelect aria-label="Project item" defaultValue="CON1"><option>CON1</option></ItemSelect>
              <Tool icon="newItem" label="New" w={31} />
              <Tool icon="copy" label="Copy" w={31} />
            </Tools>
            <GroupName $hot>Project items</GroupName>
          </Group>
          {groups.map((g) => (
            <Group key={g.name} $w={g.w} $pad={g.pad}>
              <Tools>
                {g.tools.map(([icon, label, w, extra]) => <Tool key={icon} icon={icon} label={label} w={w} {...extra} />)}
                {g.name === 'CBFEM' && (
                  <Picks>
                    <PickWrap><Pick disabled aria-label="Load effect"><option>LE1</option></Pick><Caret /></PickWrap>
                    <PickWrap><Pick aria-label="Result filter"><option>For extreme</option></Pick><Caret /></PickWrap>
                  </Picks>
                )}
                {g.name === 'FE analysis' && (
                  <Spin>
                    <input aria-label="Deformation scale" defaultValue="10.00" />
                    <svg width="7" height="14" viewBox="0 0 7 14" fill="#444"><path d="M1 4l2.500-4L6 4zM1 10h5l-2.500 4z" /></svg>
                  </Spin>
                )}
              </Tools>
              <GroupName>{g.name}</GroupName>
            </Group>
          ))}
        </Ribbon>

        <Work>
          <Viewport>
            <Model />
            <ViewBar />
            <Cost><b>Production cost</b>&nbsp; - &nbsp;119 €</Cost>
            <Stats>
              {summary.map(([name, ok, value]) => (
                <React.Fragment key={name}>
                  <dt>{name}</dt>
                  <dd>{ok === true && <Tick />}{ok === false && <Cross />}</dd>
                  <dd>{value}</dd>
                </React.Fragment>
              ))}
            </Stats>
            <Note>Not included in the check</Note>
            <Callout><RemarkText big /></Callout>
          </Viewport>

          <Side>
            <SideTabs>
              {['Analysis', 'Plates', 'Anchors', 'Welds', 'Concrete block', 'Shear'].map((t) => (
                <SideTab key={t} $on={t === 'Anchors'}>{t}</SideTab>
              ))}
            </SideTabs>
            <Results>
              <h2>Check of anchors for extreme load effect</h2>
              <AnchorTable />
              <h2>Design data</h2>
              <DesignTable />
            </Results>
            <Preview>
              <FitBtn aria-label="Fit plan"><Corners color="#666" /></FitBtn>
              <PlatePlan />
            </Preview>
          </Side>
        </Work>

        <Footer>
          <span>Design code: <b>EN</b></span>
          <span>Analysis: <b>Stress, strain</b></span>
          <span>Load effects: <b>In equilibrium</b></span>
          <span>Units: &nbsp;<b>mm</b></span>
          <a href="#idea">www.<span>ideastatica</span>.com</a>
        </Footer>
      </Page>
    </ThemeProvider>
  );
}
